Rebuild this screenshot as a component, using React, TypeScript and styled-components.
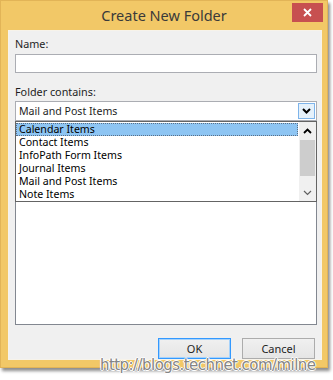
import React from "react";
import styled, { createGlobalStyle } from "styled-components";

const GlobalStyle = createGlobalStyle`
  html, body {
    margin: 0;
    padding: 0;
    background: #ffffff;
  }
  body {
    font-family: "Noto Sans", "Open Sans", sans-serif;
  }
`;

const items = [
  "Calendar Items",
  "Contact Items",
  "InfoPath Form Items",
  "Journal Items",
  "Mail and Post Items",
  "Note Items",
];

const Page = styled.div`
  position: relative;
  width: 333px;
  height: 380px;
  overflow: hidden;
`;

const Window = styled.div`
  width: 328px;
  height: 368px;
  box-sizing: border-box;
  display: flex;
  flex-direction: column;
  background: #f2c867;
  border: 1px solid #e2b457;
  box-shadow: 2px 3px 3px rgba(0, 0, 0, 0.45);
`;

const TitleBar = styled.div`
  height: 30px;
  display: grid;
  grid-template-columns: 1fr auto 1fr;
  align-items: start;
`;

const Title = styled.div`
  padding-top: 4px;
  font-family: "Noto Sans", sans-serif;
  font-size: 14.5px;
  color: #3a3a3a;
  white-space: nowrap;
`;

const CloseButton = styled.div`
  justify-self: end;
  margin-top: 2px;
  margin-right: 4px;
  width: 31px;
  height: 19px;
  background: #c75050;
  display: flex;
  align-items: center;
  justify-content: center;
`;

const Panel = styled.div`
  flex: 1;
  margin: 0 5px 7px 7px;
  background: #f0f0f0;
  border: 1px solid #f7f3ea;
  padding: 6px 4px 0 6px;
  display: flex;
  flex-direction: column;
`;

const Label = styled.div<{ gap?: number }>`
  font-size: 10.8px;
  line-height: 14px;
  color: #1e1e1e;
  margin-top: ${(p) => p.gap || 0}px;
`;

const TextBox = styled.div`
  margin-top: 3px;
  height: 19px;
  box-sizing: border-box;
  border: 1px solid #abadb3;
  background: #ffffff;
`;

const Select = styled.div`
  margin-top: 2px;
  height: 20px;
  box-sizing: border-box;
  border: 1px solid #abadb3;
  background: #ffffff;
  display: flex;
  align-items: center;
  padding: 0 1px 0 3px;
`;

const SelectText = styled.div`
  flex: 1;
  font-size: 10.6px;
  color: #1e1e1e;
`;

const ArrowButton = styled.div`
  width: 17px;
  height: 16px;
  box-sizing: border-box;
  border: 1px solid #7eb4ea;
  background: #e5f1fb;
  display: flex;
  align-items: center;
  justify-content: center;
`;

const TreeArea = styled.div`
  position: relative;
  height: 204px;
`;

const TreeBox = styled.div`
  position: absolute;
  left: 0;
  right: 0;
  top: 22px;
  bottom: 0;
  border: 1px solid #828790;
  background: #ffffff;
`;

const DropList = styled.div`
  position: absolute;
  left: 0;
  right: 0;
  top: 0;
  height: 81px;
  box-sizing: border-box;
  border: 1px solid #646464;
  background: #ffffff;
  display: flex;
  z-index: 1;
`;

const Rows = styled.div`
  flex: 1;
  padding-top: 1px;
`;

const Row = styled.div<{ selected?: boolean }>`
  height: 13px;
  font-size: 10.6px;
  line-height: 13px;
  padding-left: 3px;
  margin-right: 1px;
  color: #000000;
  white-space: nowrap;
  background: ${(p) => (p.selected ? "#8ec5f3" : "transparent")};
  outline: ${(p) => (p.selected ? "1px dotted #5a6f86" : "none")};
  outline-offset: -1px;
`;

const ScrollBar = styled.div`
  width: 17px;
  background: #f0f0f0;
  display: flex;
  flex-direction: column;
`;

const ScrollButton = styled.div`
  height: 17px;
  display: flex;
  align-items: center;
  justify-content: center;
`;

const Thumb = styled.div`
  margin: 1px 1px 0 1px;
  height: 36px;
  background: #cdcdcd;
`;

const Track = styled.div`
  flex: 1;
`;

const ButtonRow = styled.div`
  margin-top: 13px;
  display: flex;
  justify-content: flex-end;
  gap: 11px;
  padding-right: 2px;
`;

const Button = styled.div<{ primary?: boolean }>`
  width: 73px;
  height: 21px;
  box-sizing: border-box;
  border: 1px solid ${(p) => (p.primary ? "#3399ff" : "#acacac")};
  box-shadow: ${(p) => (p.primary ? "inset 0 0 0 1px #a6d2fb" : "none")};
  background: linear-gradient(#f0f0f0, #e5e5e5);
  display: flex;
  align-items: center;
  justify-content: center;
  font-size: 11px;
  color: #1e1e1e;
`;

const Watermark = styled.div`
  position: absolute;
  left: 100px;
  top: 356px;
  font-family: "DejaVu Sans", Verdana, sans-serif;
  font-size: 15px;
  letter-spacing: -0.55px;
  color: #858585;
  text-shadow: -1px 0 #fff, 1px 0 #fff, 0 -1px #fff, 0 1px #fff;
  white-space: nowrap;
`;

const Chevron = ({ up, color, w }: { up?: boolean; color: string; w: number }) => (
  <svg width="9" height="6" viewBox="0 0 9 6">
    <polyline
      points={up ? "1,5 4.5,1.5 8,5" : "1,1 4.5,4.5 8,1"}
      fill="none"
      stroke={color}
      strokeWidth={w}
    />
  </svg>
);

export default function App() {
  return (
    <Page>
      <GlobalStyle />
      <Window>
        <TitleBar>
          <span />
          <Title>Create New Folder</Title>
          <CloseButton>
            <svg width="9" height="9" viewBox="0 0 9 9">
              <path d="M1 1L8 8M8 1L1 8" stroke="#ffffff" strokeWidth="1.8" />
            </svg>
          </CloseButton>
        </TitleBar>
        <Panel>
          <Label>Name:</Label>
          <TextBox />
          <Label gap={12}>Folder contains:</Label>
          <Select>
            <SelectText>Mail and Post Items</SelectText>
            <ArrowButton>
              <Chevron color="#000" w={2} />
            </ArrowButton>
          </Select>
          <TreeArea>
            <TreeBox />
            <DropList>
              <Rows>
                {items.map((it, i) => (
                  <Row key={it} selected={i === 0}>
                    {it}
                  </Row>
                ))}
              </Rows>
              <ScrollBar>
                <ScrollButton>
                  <Chevron up color="#000" w={1.8} />
                </ScrollButton>
                <Thumb />
                <Track />
                <ScrollButton>
                  <Chevron color="#606060" w={1.2} />
                </ScrollButton>
              </ScrollBar>
            </DropList>
          </TreeArea>
          <ButtonRow>
            <Button primary>OK</Button>
            <Button>Cancel</Button>
          </ButtonRow>
        </Panel>
      </Window>
      <Watermark>http://blogs.technet.com/milne</Watermark>
    </Page>
  );
}
